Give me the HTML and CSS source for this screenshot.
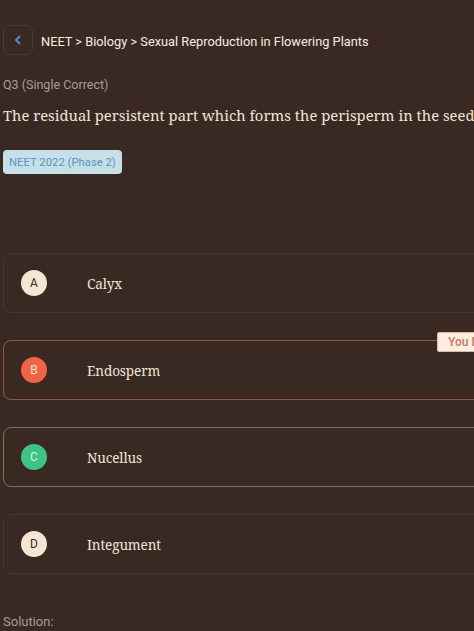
FILE: index.html
```html
<!DOCTYPE html>
<html>
<head>
<meta charset="utf-8">
<link rel="stylesheet" href="styles.css">
</head>
<body>
<div class="page">
  <header class="topbar">
    <button class="back" aria-label="Back">
      <svg width="10" height="12" viewBox="0 0 10 12"><path d="M6.5 2.5 L3 6 L6.5 9.5" fill="none" stroke="#4f8fd8" stroke-width="1.8" stroke-linecap="round" stroke-linejoin="round"/></svg>
    </button>
    <div class="crumbs">NEET &gt; Biology &gt; Sexual Reproduction in Flowering Plants</div>
  </header>
  <div class="qno">Q3 (Single Correct)</div>
  <div class="question">The residual persistent part which forms the perisperm in the seed of beet is</div>
  <div class="tag">NEET 2022 (Phase 2)</div>

  <div class="options">
    <div class="option">
      <span class="letter">A</span>
      <span class="otext">Calyx</span>
    </div>
    <div class="option wrong">
      <span class="mark">You Marked</span>
      <span class="letter">B</span>
      <span class="otext">Endosperm</span>
    </div>
    <div class="option right">
      <span class="letter">C</span>
      <span class="otext">Nucellus</span>
    </div>
    <div class="option">
      <span class="letter">D</span>
      <span class="otext">Integument</span>
    </div>
  </div>
  <div class="solution">Solution:</div>
</div>
</body>
</html>
```
FILE: styles.css
```css
html, body {
  margin: 0;
  padding: 0;
  background: #392922;
  overflow: hidden;
}
.page {
  width: 474px;
  height: 631px;
  overflow: hidden;
  font-family: Roboto, "Noto Sans", sans-serif;
  color: #f2e8dc;
}
.topbar {
  display: flex;
  align-items: center;
  padding: 25px 0 0 3px;
  gap: 8px;
}
.back {
  width: 30px;
  height: 30px;
  box-sizing: border-box;
  border: 1px solid #4c3b33;
  border-radius: 7px;
  background: #392922;
  display: flex;
  align-items: center;
  justify-content: center;
  padding: 0;
  margin: 0;
}
.crumbs {
  font-size: 12.8px;
  color: #f4ece4;
  white-space: nowrap;
  padding-top: 3px;
}
.qno {
  margin: 22px 0 0 3px;
  font-size: 12.5px;
  color: #a89d96;
}
.question {
  margin: 13px 0 0 3px;
  font-family: "Noto Serif", "DejaVu Serif", serif;
  font-size: 14.8px;
  color: #efe4d8;
  white-space: nowrap;
}
.tag {
  display: inline-block;
  margin: 25px 0 0 3px;
  padding: 6px 6px 5px;
  background: #c7dfe8;
  color: #5a96b8;
  font-size: 11.3px;
  line-height: 13px;
  border-radius: 4px;
}
.options {
  margin-top: 79px;
  margin-left: 3px;
  display: flex;
  flex-direction: column;
  gap: 27px;
}
.option {
  position: relative;
  width: 540px;
  height: 60px;
  box-sizing: border-box;
  border: 1px solid #47362e;
  border-radius: 8px;
  display: flex;
  align-items: center;
  padding-left: 17px;
}
.option.wrong { border-color: #8d5848; }
.option.right { border-color: #6f7a5c; }
.letter {
  width: 26px;
  height: 26px;
  border-radius: 50%;
  background: #f3e6d3;
  color: #3a2a22;
  font-size: 12px;
  display: flex;
  align-items: center;
  justify-content: center;
  flex: none;
}
.wrong .letter { background: #ef6347; color: #fbe0d2; }
.right .letter { background: #3fc384; color: #d9f3e4; }
.otext {
  margin-left: 40px;
  font-family: "Noto Serif", "DejaVu Serif", serif;
  font-size: 13.6px;
  letter-spacing: -0.15px;
  color: #efe4d8;
}
.mark {
  position: absolute;
  left: 433px;
  top: -9px;
  padding: 2px 10px;
  background: #fbeee0;
  color: #c4826e;
  font-size: 12px;
  font-weight: 600;
  border: 1px solid #e2b8a2;
  border-radius: 2px;
  white-space: nowrap;
}
.solution {
  margin: 40px 0 0 3px;
  font-size: 13px;
  color: #a89d96;
}
```
